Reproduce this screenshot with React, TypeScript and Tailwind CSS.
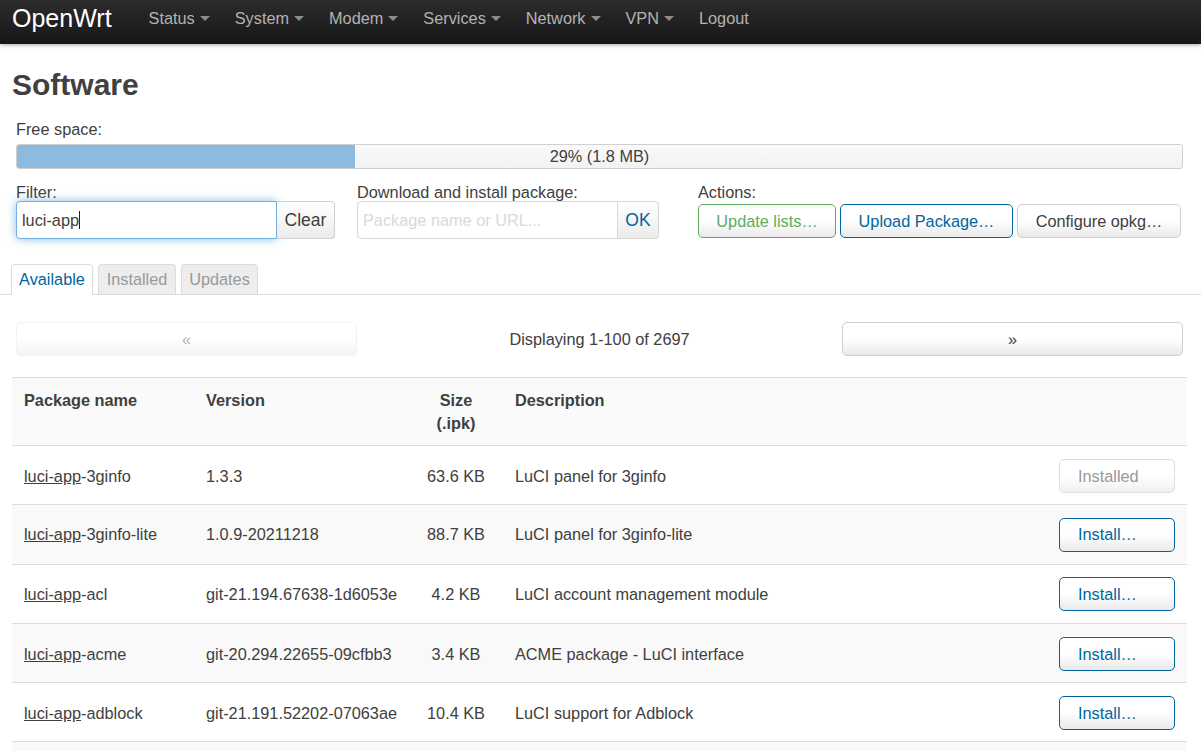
import React from "react";

const nav = ["Status", "System", "Modem", "Services", "Network", "VPN"];
const rows = [
  ["-3ginfo", "1.3.3", "63.6 KB", "LuCI panel for 3ginfo", true, 59],
  ["-3ginfo-lite", "1.0.9-20211218", "88.7 KB", "LuCI panel for 3ginfo-lite", false, 60],
  ["-acl", "git-21.194.67638-1d6053e", "4.2 KB", "LuCI account management module", false, 59],
  ["-acme", "git-20.294.22655-09cfbb3", "3.4 KB", "ACME package - LuCI interface", false, 59],
  ["-adblock", "git-21.191.52202-07063ae", "10.4 KB", "LuCI support for Adblock", false, 59],
] as const;

const btn = "h-[34px] rounded-[5px] border bg-gradient-to-b from-white from-50% to-[#e9e9e9] text-[16.3px] flex items-center justify-center";

export default function App() {
  return (
    <div className="h-[751px] w-[1201px] overflow-hidden bg-white text-[16.3px] text-[#404040] [font-family:'Liberation_Sans',Arial,sans-serif]">
      <header className="flex h-[44px] items-center bg-gradient-to-b from-[#2c2c2c] to-[#171717] pl-3 shadow-[0_1px_4px_rgba(0,0,0,0.35)]">
        <span className="mr-[37px] text-[25px] leading-none text-white -translate-y-[4px]">OpenWrt</span>
        <nav className="flex items-center gap-[25px] text-[16.3px] text-[#b3b3b3] -translate-y-[4px]">
          {nav.map((n) => (
            <span key={n} className="flex items-center gap-[5px]">
              {n}
              <span className="mt-[1px] h-0 w-0 border-x-[5px] border-t-[5px] border-x-transparent border-t-[#8c8c8c]" />
            </span>
          ))}
          <span>Logout</span>
        </nav>
      </header>

      <main className="pl-3 pr-[14px]">
        <h1 className="mt-[24px] -translate-y-[1px] text-[30px] font-bold leading-[36px] text-[#404040]">Software</h1>

        <div className="ml-1 mt-[15px] mr-[4px]">
          <div className="leading-[20px]">Free space:</div>
          <div className="relative mt-[5px] h-[25px] rounded-[3px] border border-[#cfcfcf] bg-gradient-to-b from-[#fafafa] to-[#f2f2f2] overflow-hidden">
            <div className="h-full w-[29%] bg-[#8dbbdf]" />
            <div className="absolute inset-0 flex items-center justify-center leading-none">29% (1.8 MB)</div>
          </div>
        </div>

        <div className="ml-1 mt-[13px] flex">
          <div className="w-[341px]">
            <div className="leading-[20px] -mb-[1px]">Filter:</div>
            <div className="flex h-[38px]">
              <div className="flex w-[261px] items-center rounded-l-[4px] border border-[#74aedb] bg-white pl-[5px] shadow-[0_0_10px_rgba(102,175,233,0.8)] text-[#404040]">
                luci-app<span className="h-[18px] w-px bg-[#222]" />
              </div>
              <div className="flex w-[58px] items-center justify-center rounded-r-[4px] border border-l-0 border-[#d0d0d0] bg-gradient-to-b from-white to-[#ececec] text-[17.5px]">Clear</div>
            </div>
          </div>
          <div className="w-[341px]">
            <div className="leading-[20px] -mb-[1px]">Download and install package:</div>
            <div className="flex h-[38px]">
              <div className="flex w-[261px] items-center rounded-l-[4px] border border-[#d8d8d8] bg-white pl-[5px] text-[#d9d9d9]">Package name or URL...</div>
              <div className="flex w-[41px] items-center justify-center rounded-r-[4px] border border-l-0 border-[#d8d8d8] bg-gradient-to-b from-white to-[#ececec] text-[17.5px] text-[#00659c]">OK</div>
            </div>
          </div>
          <div>
            <div className="leading-[20px] -mb-[1px]">Actions:</div>
            <div className="mt-[3px] flex gap-[4px]">
              <div className={`${btn} w-[138px] border-[#5cad5c] text-[#5cad5c]`}>Update lists…</div>
              <div className={`${btn} w-[173px] border-[#00659c] text-[#00659c]`}>Upload Package…</div>
              <div className={`${btn} w-[164px] border-[#cfcfcf]`}>Configure opkg…</div>
            </div>
          </div>
        </div>

        <div className="mt-[25px] -mr-[14px] flex h-[31px] items-end gap-[5px] border-b border-[#dcdcdc] -ml-[12px] pl-[11px]">
          <div className="-mb-px flex h-[31px] w-[82px] items-center justify-center rounded-t-[4px] border border-b-white border-[#dcdcdc] bg-white text-[#00659c]">Available</div>
          <div className="flex h-[30px] w-[78px] items-center justify-center rounded-t-[4px] border border-b-0 border-[#dcdcdc] bg-[#ededed] text-[#9a9a9a]">Installed</div>
          <div className="flex h-[30px] w-[77px] items-center justify-center rounded-t-[4px] border border-b-0 border-[#dcdcdc] bg-[#ededed] text-[#9a9a9a]">Updates</div>
        </div>

        <div className="ml-1 mr-[4px] mt-[27px] flex items-center justify-between">
          <div className="flex h-[34px] w-[341px] items-center justify-center rounded-[5px] border border-[#f3f3f3] bg-gradient-to-b from-white from-50% to-[#f4f4f4] text-[#b5b5b5]">«</div>
          <div>Displaying 1-100 of 2697</div>
          <div className={`${btn} w-[341px] border-[#cfcfcf]`}>»</div>
        </div>

        <div className="mt-[21px]">
          <div className="grid h-[69px] grid-cols-[182px_215px_94px_1fr_140px] border-y border-[#dcdcdc] bg-[#fafafa] pt-[11px] font-bold leading-[23px] text-[#404040]">
            <div className="pl-3">Package name</div>
            <div className="pl-3">Version</div>
            <div className="text-center">Size<br />(.ipk)</div>
            <div className="pl-3">Description</div>
            <div />
          </div>
          {rows.map(([name, ver, size, desc, installed, h], i) => (
            <div
              key={name}
              style={{ height: h }}
              className={`grid grid-cols-[182px_215px_94px_1fr_140px] items-center border-b border-[#dcdcdc] ${i === 1 || i === 2 ? "pt-0" : "pt-[2px]"} ${i % 2 === 1 ? "bg-[#f9f9f9]" : "bg-white"}`}
            >
              <div className="pl-3"><span className="underline">luci-app</span>{name}</div>
              <div className="pl-3">{ver}</div>
              <div className="text-center">{size}</div>
              <div className="pl-3">{desc}</div>
              <div className="pl-3">
                {installed ? (
                  <div className={`${btn} w-[116px] justify-start pl-[18px] border-[#dedede] text-[#999] from-[#fafafa] to-[#f0f0f0]`}>Installed</div>
                ) : (
                  <div className={`${btn} w-[116px] justify-start pl-[18px] border-[#00659c] text-[#00659c]`}>Install…</div>
                )}
              </div>
            </div>
          ))}
          <div className="h-[59px] bg-[#f9f9f9]" />
        </div>
      </main>
    </div>
  );
}
